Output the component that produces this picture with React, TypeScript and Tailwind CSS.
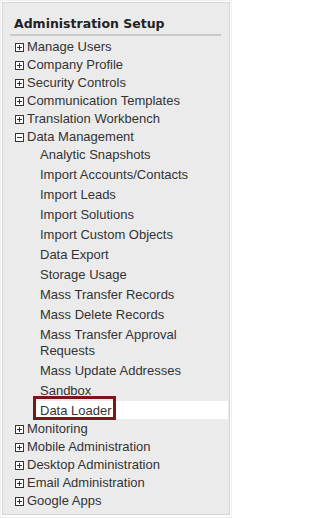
import React from "react";

function Box({ open }: { open?: boolean }) {
  return (
    <svg width="9" height="9" viewBox="0 0 9 9" className="shrink-0">
      <rect x="0.5" y="0.5" width="8" height="8" fill="#fff" stroke="#333" strokeWidth="1" />
      <line x1="2" y1="4.5" x2="7" y2="4.5" stroke="#333" strokeWidth="1" />
      {!open && <line x1="4.5" y1="2" x2="4.5" y2="7" stroke="#333" strokeWidth="1" />}
    </svg>
  );
}

function Top({ label, open }: { label: string; open?: boolean }) {
  return (
    <div className="flex items-center h-[18px] pl-[12px] gap-[3px]">
      <Box open={open} />
      <span className="leading-[18px] whitespace-nowrap">{label}</span>
    </div>
  );
}

function Sub({ label }: { label: string }) {
  return <div className="pl-[37px] py-[2px] leading-[16px] pr-[40px]">{label}</div>;
}

export default function App() {
  const topA = ["Manage Users", "Company Profile", "Security Controls", "Communication Templates", "Translation Workbench"];
  const subs = [
    "Analytic Snapshots",
    "Import Accounts/Contacts",
    "Import Leads",
    "Import Solutions",
    "Import Custom Objects",
    "Data Export",
    "Storage Usage",
    "Mass Transfer Records",
    "Mass Delete Records",
    "Mass Transfer Approval Requests",
    "Mass Update Addresses",
    "Sandbox",
  ];
  const topB = ["Monitoring", "Mobile Administration", "Desktop Administration", "Email Administration", "Google Apps"];
  return (
    <div className="w-[232px] h-[518px] bg-white border border-[#efefef] p-[1px]">
      <div
        className="h-[513px] bg-[#ebebeb] border border-[#d4d4d4] text-[13px] text-[#333]"
        style={{ fontFamily: '"Liberation Sans", Arial, sans-serif' }}
      >
        <div
          className="pt-[13px] pl-[11px] h-[31px] font-bold text-[12.5px] leading-[16px] text-[#222]"
          style={{ fontFamily: '"DejaVu Sans", Verdana, sans-serif' }}
        >
          Administration Setup
        </div>
        <div className="mx-[7px] h-[2px] bg-[#c9c9c9] mr-[8px]" />
        <div className="h-[2px]" />
        {topA.map((t) => (
          <Top key={t} label={t} />
        ))}
        <Top label="Data Management" open />
        <div className="-mt-[1px]">
          {subs.map((s) => (
            <Sub key={s} label={s} />
          ))}
        </div>
        <div className="relative ml-[30px] mr-[1px] h-[18px] mb-[1px] bg-white">
          <span className="pl-[7px] leading-[18px] underline underline-offset-2">Data Loader</span>
          <div className="absolute left-0 top-[-5px] w-[83px] h-[24px] border-[3px] border-[#7b1719]" />
        </div>
        {topB.map((t) => (
          <Top key={t} label={t} />
        ))}
      </div>
    </div>
  );
}
